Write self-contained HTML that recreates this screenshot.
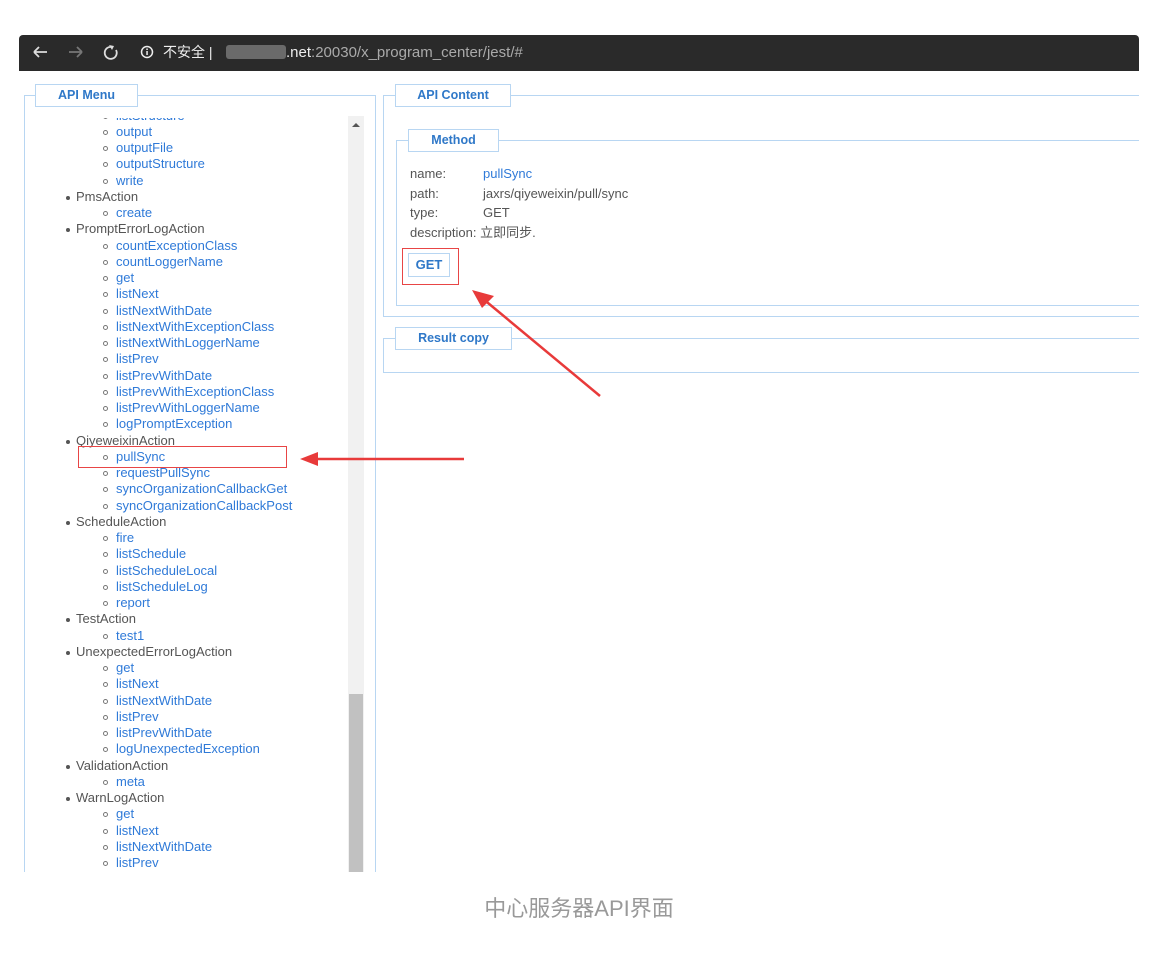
<!DOCTYPE html>
<html><head><meta charset="utf-8"><style>
*{margin:0;padding:0;box-sizing:border-box}
body{width:1174px;height:960px;background:#fff;position:relative;overflow:hidden;font-family:"Liberation Sans","Noto Sans CJK SC",sans-serif;font-size:13px}
.abs{position:absolute}
.bar{left:19px;top:35px;width:1120px;height:36px;background:#2a2a2a;border-radius:4px 4px 0 0}
.fs{position:absolute;border:1px solid #b8d6f2}
.lg{position:absolute;background:#fff;border:1px solid #b8d6f2;color:#2f78c8;font-weight:bold;font-size:12.5px;text-align:center;line-height:21px;height:23px}
.row{position:absolute;height:16px;line-height:16px;white-space:nowrap}
.t{left:76px;color:#555}
.s{left:116px;color:#2f7ad8}
.t:before{content:"";position:absolute;left:-10px;top:7px;width:4px;height:4px;border-radius:50%;background:#555}
.s:before{content:"";position:absolute;left:-13px;top:6px;width:3px;height:3px;border-radius:50%;border:1px solid #777}
.kv{position:absolute;left:410px;color:#555;line-height:19.5px}
</style></head><body>
<div class="abs bar"></div>
<svg class="abs" style="left:30px;top:42px" width="100" height="20" viewBox="0 0 100 20">
<path d="M4 10h13M4 10l5-5M4 10l5 5" stroke="#ddd" stroke-width="1.8" fill="none"/>
<path d="M39 10h13M52 10l-5-5M52 10l-5 5" stroke="#777" stroke-width="1.8" fill="none"/>
<path d="M82 5a6 6 0 1 0 4 3" stroke="#ddd" stroke-width="1.8" fill="none"/><path d="M79 3l5 1-2 4z" fill="#ddd"/>
</svg>
<svg class="abs" style="left:140px;top:45px" width="14" height="14"><circle cx="7" cy="7" r="5.5" stroke="#eee" stroke-width="1.5" fill="none"/><rect x="6.3" y="6" width="1.5" height="4" fill="#eee"/><rect x="6.3" y="3.5" width="1.5" height="1.5" fill="#eee"/></svg>
<div class="abs" style="left:163px;top:43px;color:#eee;font-size:14px;line-height:18px">不安全 |</div>
<div class="abs" style="left:226px;top:45px;width:60px;height:14px;background:#6a6a6a;border-radius:3px"></div>
<div class="abs" style="left:286px;top:44px;font-size:15px;line-height:18px;color:#eee">.net<span style="color:#aaa">:20030/x_program_center/jest/#</span></div>

<div class="fs" style="left:24px;top:95px;width:352px;height:777px;border-bottom:none"></div>
<div class="abs" style="left:25px;top:110px;width:350px;height:762px;background:#fff;overflow:hidden">
<div class="abs" style="left:323px;top:6px;width:16px;height:756px;background:#f1f1f1"></div>
<div class="abs" style="left:324px;top:584px;width:14px;height:180px;background:#c1c1c1"></div>
<div class="abs" style="left:327px;top:13px;width:0;height:0;border-left:4px solid transparent;border-right:4px solid transparent;border-bottom:4px solid #555"></div>
</div>
<div class="lg" style="left:35px;top:84px;width:103px">API Menu</div>
<div class="abs" style="left:0;top:118px;width:345px;height:754px;overflow:hidden">
<div class="row s" style="top:-10px">listStructure</div>
<div class="row s" style="top:6px">output</div>
<div class="row s" style="top:22px">outputFile</div>
<div class="row s" style="top:38px">outputStructure</div>
<div class="row s" style="top:55px">write</div>
<div class="row t" style="top:71px">PmsAction</div>
<div class="row s" style="top:87px">create</div>
<div class="row t" style="top:103px">PromptErrorLogAction</div>
<div class="row s" style="top:120px">countExceptionClass</div>
<div class="row s" style="top:136px">countLoggerName</div>
<div class="row s" style="top:152px">get</div>
<div class="row s" style="top:168px">listNext</div>
<div class="row s" style="top:185px">listNextWithDate</div>
<div class="row s" style="top:201px">listNextWithExceptionClass</div>
<div class="row s" style="top:217px">listNextWithLoggerName</div>
<div class="row s" style="top:233px">listPrev</div>
<div class="row s" style="top:250px">listPrevWithDate</div>
<div class="row s" style="top:266px">listPrevWithExceptionClass</div>
<div class="row s" style="top:282px">listPrevWithLoggerName</div>
<div class="row s" style="top:298px">logPromptException</div>
<div class="row t" style="top:315px">QiyeweixinAction</div>
<div class="row s" style="top:331px">pullSync</div>
<div class="row s" style="top:347px">requestPullSync</div>
<div class="row s" style="top:363px">syncOrganizationCallbackGet</div>
<div class="row s" style="top:380px">syncOrganizationCallbackPost</div>
<div class="row t" style="top:396px">ScheduleAction</div>
<div class="row s" style="top:412px">fire</div>
<div class="row s" style="top:428px">listSchedule</div>
<div class="row s" style="top:445px">listScheduleLocal</div>
<div class="row s" style="top:461px">listScheduleLog</div>
<div class="row s" style="top:477px">report</div>
<div class="row t" style="top:493px">TestAction</div>
<div class="row s" style="top:510px">test1</div>
<div class="row t" style="top:526px">UnexpectedErrorLogAction</div>
<div class="row s" style="top:542px">get</div>
<div class="row s" style="top:558px">listNext</div>
<div class="row s" style="top:575px">listNextWithDate</div>
<div class="row s" style="top:591px">listPrev</div>
<div class="row s" style="top:607px">listPrevWithDate</div>
<div class="row s" style="top:623px">logUnexpectedException</div>
<div class="row t" style="top:640px">ValidationAction</div>
<div class="row s" style="top:656px">meta</div>
<div class="row t" style="top:672px">WarnLogAction</div>
<div class="row s" style="top:688px">get</div>
<div class="row s" style="top:705px">listNext</div>
<div class="row s" style="top:721px">listNextWithDate</div>
<div class="row s" style="top:737px">listPrev</div>
</div>
<div class="abs" style="left:78px;top:446px;width:209px;height:22px;border:1px solid #e84545"></div>

<div class="fs" style="left:383px;top:95px;width:760px;height:222px;border-right:none"></div>
<div class="lg" style="left:395px;top:84px;width:116px">API Content</div>
<div class="fs" style="left:396px;top:140px;width:750px;height:166px;border-right:none"></div>
<div class="lg" style="left:408px;top:129px;width:91px">Method</div>
<div class="kv" style="top:164px">name:</div><div class="kv" style="left:483px;top:164px;color:#2f7ad8">pullSync</div>
<div class="kv" style="top:184px">path:</div><div class="kv" style="left:483px;top:184px">jaxrs/qiyeweixin/pull/sync</div>
<div class="kv" style="top:203px">type:</div><div class="kv" style="left:483px;top:203px">GET</div>
<div class="kv" style="top:223px">description: 立即同步.</div>
<div class="abs" style="left:402px;top:248px;width:57px;height:37px;border:1px solid #e84545"></div>
<div class="lg" style="left:408px;top:253px;width:42px;height:24px;line-height:22px;font-size:13px">GET</div>
<div class="fs" style="left:383px;top:338px;width:760px;height:35px;border-right:none"></div>
<div class="lg" style="left:395px;top:327px;width:117px">Result copy</div>
<div class="abs" style="left:1139px;top:80px;width:35px;height:320px;background:#fff"></div>

<svg class="abs" style="left:0;top:0" width="1174" height="960">
<path d="M600 396L482 298" stroke="#e83a3a" stroke-width="2.5"/>
<path d="M472 290L494 296L482 308Z" fill="#e83a3a"/>
<path d="M464 459L312 459" stroke="#e83a3a" stroke-width="2.5"/>
<path d="M300 459L318 452L318 466Z" fill="#e83a3a"/>
</svg>
<div class="abs" style="left:0;width:1158px;top:896px;text-align:center;color:#999;font-size:22px;line-height:26px">中心服务器API界面</div>
</body></html>
